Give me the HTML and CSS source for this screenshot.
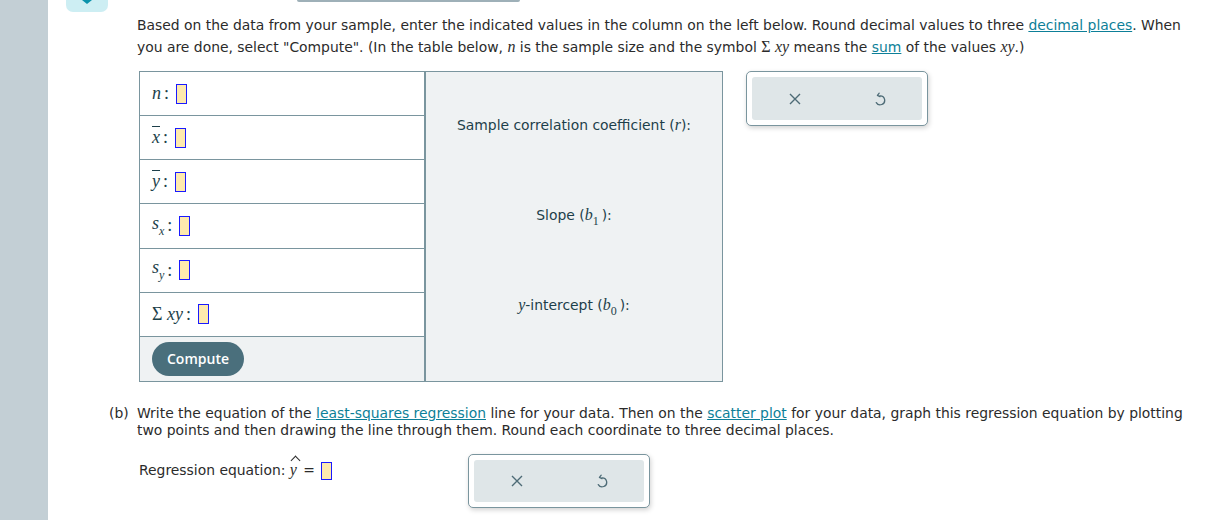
FILE: index.html
```html
<!DOCTYPE html>
<html>
<head>
<meta charset="utf-8">
<link rel="stylesheet" href="styles.css">
</head>
<body>
<div class="sidebar"></div>
<div class="main">
  <div class="topstrip">
    <div class="tab"><svg width="12" height="5" viewBox="0 0 12 5"><path d="M1 0 L6 4 L11 0 Z" fill="#0b93ab"/></svg></div>
    <div class="topbar"></div>
  </div>
  <p class="intro">Based on the data from your sample, enter the indicated values in the column on the left below. Round decimal values to three <a href="#">decimal places</a>. When you are done, select "Compute". (In the table below, <span class="m">n</span> is the sample size and the symbol <span class="mu">Σ</span> <span class="m">xy</span> means the <a href="#">sum</a> of the values <span class="m">xy</span>.)</p>

  <div class="work">
    <div class="calc">
      <div class="inputs">
        <div class="row"><span class="m lbl">n</span><span class="colon">:</span><span class="box"></span></div>
        <div class="row"><span class="m lbl bar">x</span><span class="colon">:</span><span class="box"></span></div>
        <div class="row"><span class="m lbl bar">y</span><span class="colon">:</span><span class="box"></span></div>
        <div class="row"><span class="m lbl">s<sub>x</sub></span><span class="colon">:</span><span class="box"></span></div>
        <div class="row"><span class="m lbl">s<sub>y</sub></span><span class="colon">:</span><span class="box"></span></div>
        <div class="row"><span class="mu lbl">Σ</span>&nbsp;<span class="m lbl">xy</span><span class="colon">:</span><span class="box"></span></div>
        <div class="row btnrow"><button class="compute">Compute</button></div>
      </div>
      <div class="results">
        <div class="res">Sample correlation coefficient (<span class="m">r</span>):</div>
        <div class="res">Slope (<span class="m">b</span><sub class="num">1</sub>):</div>
        <div class="res"><span class="m">y</span>-intercept (<span class="m">b</span><sub class="num">0</sub>):</div>
      </div>
    </div>
    <div class="actions">
      <div class="inner">
        <svg class="ic" width="12" height="12" viewBox="0 0 12 12"><path d="M1 1 L11 11 M11 1 L1 11" stroke="#4d6b76" stroke-width="1.4" fill="none"/></svg>
        <svg class="ic" width="12" height="14" viewBox="0 0 12 14"><path d="M6 3.8 A4.5 4.5 0 1 1 2.3 10.6" stroke="#4d6b76" stroke-width="1.3" fill="none" stroke-linecap="round"/><path d="M5.2 1.2 L3.4 3.3 L6 4.6" stroke="#4d6b76" stroke-width="1.3" fill="none" stroke-linecap="round" stroke-linejoin="round"/></svg>
      </div>
    </div>
  </div>

  <div class="partb">
    <span class="plabel">(b)</span>
    <p>Write the equation of the <a href="#">least-squares regression</a> line for your data. Then on the <a href="#">scatter plot</a> for your data, graph this regression equation by plotting two points and then drawing the line through them. Round each coordinate to three decimal places.</p>
  </div>

  <div class="eqrow">
    <div class="eq">Regression equation: <span class="hat m">y</span> <span class="eqs">=</span> <span class="box"></span></div>
    <div class="actions small">
      <div class="inner">
        <svg class="ic" width="12" height="12" viewBox="0 0 12 12"><path d="M1 1 L11 11 M11 1 L1 11" stroke="#4d6b76" stroke-width="1.4" fill="none"/></svg>
        <svg class="ic" width="12" height="14" viewBox="0 0 12 14"><path d="M6 3.8 A4.5 4.5 0 1 1 2.3 10.6" stroke="#4d6b76" stroke-width="1.3" fill="none" stroke-linecap="round"/><path d="M5.2 1.2 L3.4 3.3 L6 4.6" stroke="#4d6b76" stroke-width="1.3" fill="none" stroke-linecap="round" stroke-linejoin="round"/></svg>
      </div>
    </div>
  </div>
</div>
</body>
</html>
```

FILE: styles.css
```css
html, body {
  margin: 0;
  padding: 0;
  background: #ffffff;
}
body {
  display: flex;
  width: 1227px;
  height: 520px;
  overflow: hidden;
  font-family: "DejaVu Sans", Verdana, sans-serif;
  font-size: 13.9px;
  color: #2b2b2b;
}
.sidebar {
  width: 48px;
  flex: none;
  background: #c3cfd5;
}
.main {
  flex: 1;
  display: flex;
  flex-direction: column;
}
.topstrip {
  display: flex;
  align-items: flex-start;
  height: 12px;
}
.tab {
  margin-left: 18px;
  width: 42px;
  height: 12px;
  background: #cdeef3;
  border-radius: 0 0 7px 7px;
  display: flex;
  justify-content: center;
}
.topbar {
  margin-left: 189px;
  width: 223px;
  height: 2px;
  background: #9eb0b8;
  border-radius: 0 0 2px 2px;
}
.intro {
  margin: 3px 30px 0 89px;
  line-height: 21px;
}
a {
  color: #0d7f98;
  text-decoration: underline;
}
.m {
  font-family: "Liberation Serif", "DejaVu Serif", serif;
  font-style: italic;
  font-size: 16px;
}
.mu {
  font-family: "Liberation Serif", "DejaVu Serif", serif;
  font-size: 16px;
}
.work {
  display: flex;
  align-items: flex-start;
  margin: 13px 0 0 91px;
  gap: 23px;
}
.calc {
  display: flex;
  border: 1px solid #7a959e;
  height: 309px;
}
.inputs {
  width: 284px;
  display: grid;
  grid-template-rows: repeat(7, 1fr);
  border-right: 1px solid #7a959e;
}
.row {
  display: flex;
  align-items: center;
  padding-left: 12px;
  border-bottom: 1px solid #7a959e;
  color: #1d3f4a;
}
.row .lbl { color: #1d3f4a; font-size: 18px; }
.row sub {
  font-size: 12px;
  vertical-align: -6px;
}
.colon {
  font-family: "Liberation Serif", serif;
  font-size: 18px;
  margin: 0 7px 0 3px;
}
.bar {
  text-decoration: overline;
}
.box {
  display: inline-block;
  width: 9px;
  height: 18px;
  background: #feeaae;
  border: 1px solid #1a1aff;
}
.btnrow {
  border-bottom: none;
  background: #eff2f3;
}
.compute {
  font-family: "Open Sans", Lato, sans-serif;
  font-size: 14px;
  font-weight: 600;
  color: #ffffff;
  background: #4a6f7c;
  border: none;
  border-radius: 17px;
  width: 92px;
  height: 34px;
  padding: 0;
}
.results {
  width: 296px;
  background: #eff2f3;
  border-left: 1px solid #7a959e;
  display: flex;
  flex-direction: column;
  padding-top: 42px;
  gap: 68px;
  color: #1d3f4a;
}
.res {
  text-align: center;
  height: 22px;
  line-height: 22px;
}
.res sub.num {
  font-family: "Liberation Serif", serif;
  font-size: 12px;
  vertical-align: -5px;
  margin-right: 3px;
}
.actions {
  width: 182px;
  height: 55px;
  border: 1px solid #7a959e;
  border-radius: 5px;
  background: #fff;
  box-shadow: 1px 2px 5px rgba(0,0,0,0.18);
  padding: 5px;
  box-sizing: border-box;
}
.inner {
  height: 100%;
  background: #dfe6e8;
  border-radius: 3px;
  display: flex;
  align-items: center;
  justify-content: space-around;
}
.partb {
  display: flex;
  margin: 23px 30px 0 61px;
}
.plabel {
  width: 28px;
  flex: none;
  line-height: 17px;
}
.partb p {
  margin: 0;
  line-height: 17px;
}
.eqrow {
  display: flex;
  align-items: flex-start;
  margin: 15px 0 0 91px;
}
.eq {
  width: 329px;
  padding-top: 7px;
  color: #2b2b2b;
}
.hat {
  position: relative;
  display: inline-block;
}
.hat::before {
  content: "";
  position: absolute;
  left: 2px;
  top: -4px;
  width: 6px;
  height: 6px;
  border-left: 1.2px solid #2b2b2b;
  border-top: 1.2px solid #2b2b2b;
  transform: rotate(45deg);
}
.eqs {
  margin: 0 2px;
}
.eq .box {
  vertical-align: middle;
  width: 9px;
  height: 16px;
}
.actions.small {
  width: 182px;
  height: 54px;
}
```
